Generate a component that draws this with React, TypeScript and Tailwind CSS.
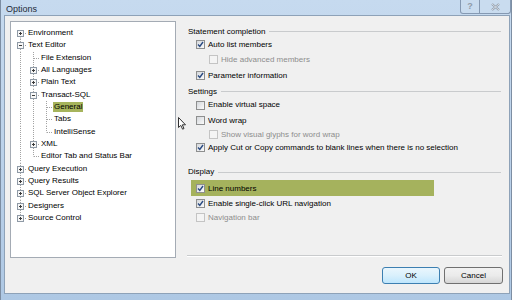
import React from "react";

type Guide = "I" | "T" | "L" | "F" | " ";

const tree: { label: string; g: Guide[]; exp?: "+" | "-"; selected?: boolean }[] = [
  { label: "Environment", g: ["F"], exp: "+" },
  { label: "Text Editor", g: ["T"], exp: "-" },
  { label: "File Extension", g: ["I", "T"] },
  { label: "All Languages", g: ["I", "T"], exp: "+" },
  { label: "Plain Text", g: ["I", "T"], exp: "+" },
  { label: "Transact-SQL", g: ["I", "T"], exp: "-" },
  { label: "General", g: ["I", "I", "T"], selected: true },
  { label: "Tabs", g: ["I", "I", "T"] },
  { label: "IntelliSense", g: ["I", "I", "L"] },
  { label: "XML", g: ["I", "T"], exp: "+" },
  { label: "Editor Tab and Status Bar", g: ["I", "L"] },
  { label: "Query Execution", g: ["T"], exp: "+" },
  { label: "Query Results", g: ["T"], exp: "+" },
  { label: "SQL Server Object Explorer", g: ["T"], exp: "+" },
  { label: "Designers", g: ["T"], exp: "+" },
  { label: "Source Control", g: ["L"], exp: "+" },
];

const dot = { stroke: "#a3a3a3", strokeWidth: 1, strokeDasharray: "1 1" };

function GuideCell({ kind, exp }: { kind: Guide; exp?: "+" | "-" }) {
  return (
    <svg width="13" height="12.33" className="shrink-0">
      {(kind === "I" || kind === "T") && <line x1="6.5" y1="0" x2="6.5" y2="12.33" {...dot} />}
      {kind === "L" && <line x1="6.5" y1="0" x2="6.5" y2="6.5" {...dot} />}
      {kind === "F" && <line x1="6.5" y1="6.5" x2="6.5" y2="12.33" {...dot} />}
      {kind !== "I" && kind !== " " && <line x1="7" y1="6.5" x2="13" y2="6.5" {...dot} />}
      {exp && (
        <g>
          <rect x="3.5" y="3.5" width="6" height="6" fill="#f7f7f7" stroke="#8f9aa6" />
          <line x1="5" y1="6.5" x2="8" y2="6.5" stroke="#3b3b3b" />
          {exp === "+" && <line x1="6.5" y1="5" x2="6.5" y2="8" stroke="#3b3b3b" />}
        </g>
      )}
    </svg>
  );
}

function Check({ checked, disabled }: { checked?: boolean; disabled?: boolean }) {
  return (
    <span
      className={`w-[9px] h-[9px] shrink-0 border flex items-center justify-center ${
        disabled
          ? "border-[#c4c4c4] bg-[#f4f4f4]"
          : "border-[#8e8f8f] bg-gradient-to-br from-[#d4d7db] to-[#fbfbfb]"
      }`}
    >
      {checked && (
        <svg width="7" height="7" viewBox="0 0 7 7">
          <path d="M1 3.6 L2.8 5.5 L6 1" fill="none" stroke="#2a4a82" strokeWidth="1.4" />
        </svg>
      )}
    </span>
  );
}

function Item({
  label,
  checked,
  disabled,
  sub,
  className = "",
}: {
  label: string;
  checked?: boolean;
  disabled?: boolean;
  sub?: boolean;
  className?: string;
}) {
  return (
    <div className={`h-[12px] flex items-center gap-[3px] ${sub ? "pl-[21px]" : "pl-[8px]"} ${className}`}>
      <Check checked={checked} disabled={disabled} />
      <span className={disabled ? "text-[#8d8d8d]" : "text-black"}>{label}</span>
    </div>
  );
}

function Header({ label, className = "" }: { label: string; className?: string }) {
  return (
    <div className={`h-[12px] flex items-center pr-[8px] ${className}`}>
      <span>{label}</span>
      <div className="flex-1 h-px bg-[#c9cbcd] ml-[4px]" />
    </div>
  );
}

export default function App() {
  return (
    <div
      className="w-[516px] h-[300px] bg-white overflow-hidden relative text-[8px] leading-none text-black"
      style={{ fontFamily: '"Liberation Sans", Arial, sans-serif' }}
    >
      <div className="w-[512px] h-[300px] flex flex-col border-l border-r border-[#7d8ea3] bg-gradient-to-b from-[#c6daef] via-[#bcd2ea] to-[#aec8e4]">
        {/* title bar */}
        <div className="h-[15px] flex items-start shrink-0">
          <span className="ml-[5px] mt-[5px] text-[9px] text-[#1e2a38]">Options</span>
          <div className="ml-auto flex">
            <div className="w-[20px] h-[14px] border border-t-0 border-[#8599b2] rounded-bl-[3px] flex items-center justify-center bg-[#c9dcef]">
              <span className="text-[9px] font-bold text-[#8e9aa8]">?</span>
            </div>
            <div className="w-[31px] h-[14px] border border-t-0 border-l-0 border-[#8599b2] rounded-br-[3px] flex items-center justify-center bg-[#c9dcef]">
              <svg width="9" height="8" viewBox="0 0 9 8">
                <path d="M1 1 L8 7 M8 1 L1 7" stroke="#8e9aa8" strokeWidth="2.2" />
                <path d="M1 1 L8 7 M8 1 L1 7" stroke="#e8eef4" strokeWidth="0.8" />
              </svg>
            </div>
          </div>
        </div>

        {/* client */}
        <div className="flex-1 ml-[3px] mr-[1px] mb-[6px] border border-[#8ea2b8] bg-[#f0f0f0] flex">
          {/* tree */}
          <div className="pl-[5px] pt-[5px]">
            <div className="w-[166px] h-[237px] border border-[#a4abb4] bg-white pt-[5px] pl-[3px]">
              {tree.map((t) => (
                <div key={t.label} className="h-[12.33px] flex items-center">
                  {t.g.map((k, i) => (
                    <GuideCell key={i} kind={k} exp={i === t.g.length - 1 ? t.exp : undefined} />
                  ))}
                  <span
                    className={`px-[1px] h-[10px] flex items-center whitespace-nowrap ${
                      t.selected ? "bg-[#a6b45c]" : ""
                    }`}
                  >
                    {t.label}
                  </span>
                </div>
              ))}
            </div>
          </div>

          {/* settings */}
          <div className="flex-1 ml-[12px] pt-[9.7px] flex flex-col">
            <Header label="Statement completion" />
            <Item label="Auto list members" checked className="mt-[1px]" />
            <Item label="Hide advanced members" disabled sub className="mt-[3.3px]" />
            <Item label="Parameter information" checked className="mt-[3.7px]" />

            <Header label="Settings" className="mt-[4px]" />
            <Item label="Enable virtual space" className="mt-[1.6px]" />
            <Item label="Word wrap" className="mt-[3.4px]" />
            <Item label="Show visual glyphs for word wrap" disabled sub className="mt-[2px]" />
            <Item label="Apply Cut or Copy commands to blank lines when there is no selection" checked className="mt-[1.3px]" />

            <Header label="Display" className="mt-[12.5px]" />
            <div className="mt-[1.5px] ml-[3px] w-[243px] h-[16px] bg-[#a5b25d] flex items-center gap-[3px] pl-[5px] pt-[2px]">
              <Check checked />
              <span>Line numbers</span>
            </div>
            <Item label="Enable single-click URL navigation" checked className="mt-[1.7px]" />
            <Item label="Navigation bar" disabled className="mt-[2px]" />

            <div className="mt-auto -ml-[1px] mr-[7px] h-px bg-[#c9cbcd] border-b border-white box-content" />
            <div className="mt-[10px] mb-[9px] mr-[6px] flex justify-end gap-[4px]">
              <button className="w-[58px] h-[17px] rounded-[3px] border border-[#3c7fb1] bg-gradient-to-b from-[#eaf6fd] via-[#d9f0fc] to-[#bee6fd] flex items-center justify-center">
                OK
              </button>
              <button className="w-[59px] h-[17px] rounded-[3px] border border-[#707070] bg-gradient-to-b from-[#f2f2f2] via-[#ebebeb] to-[#d6d6d6] flex items-center justify-center">
                Cancel
              </button>
            </div>
          </div>
        </div>
      </div>

      {/* mouse pointer */}
      <svg width="9" height="13" viewBox="0 0 9 13" className="absolute left-[178px] top-[117px]">
        <path d="M0.5 0.5 L0.5 10.5 L2.8 8.4 L4.6 12.2 L6 11.5 L4.3 7.8 L7.5 7.8 Z" fill="#fff" stroke="#333" strokeWidth="1" />
      </svg>
    </div>
  );
}
